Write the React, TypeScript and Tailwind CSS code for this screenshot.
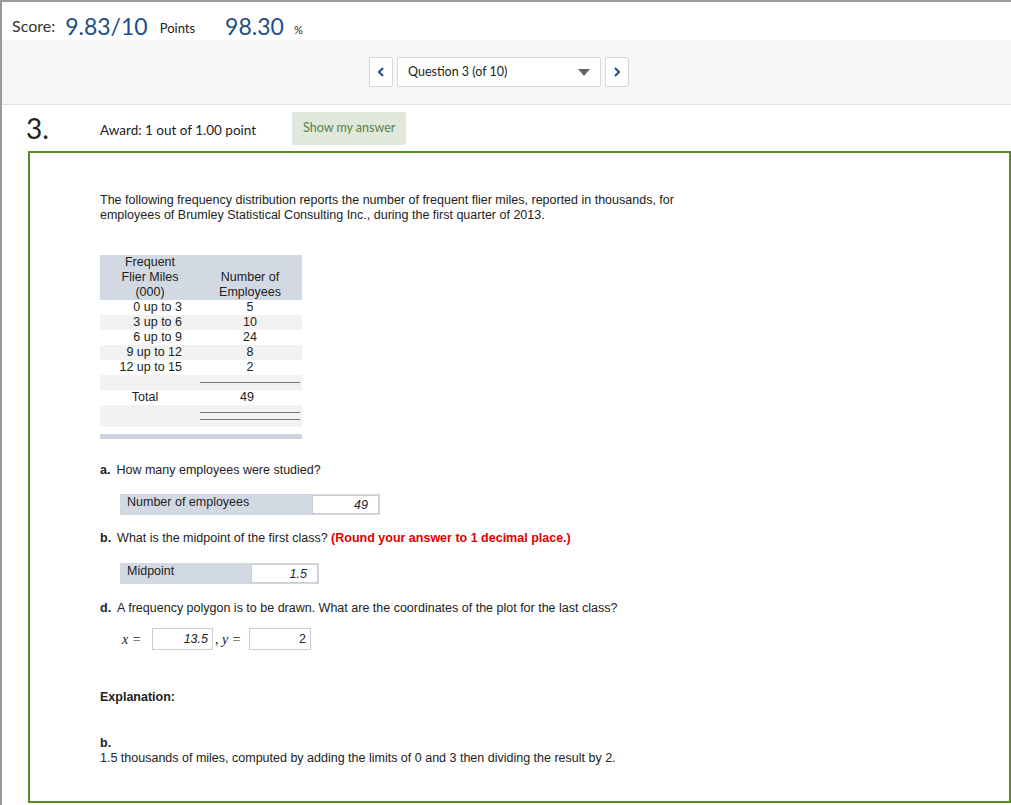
export default function App() {
  const rows = [
    ["0 up to 3", "5"],
    ["3 up to 6", "10"],
    ["6 up to 9", "24"],
    ["9 up to 12", "8"],
    ["12 up to 15", "2"],
  ];
  const arial = { fontFamily: '"Liberation Sans", Arial, sans-serif' };
  return (
    <div className="w-[1011px] h-[805px] bg-white overflow-hidden border-l-2 border-t-2 border-[#9a9a9a] text-[#222]" style={{ fontFamily: 'Lato, "Open Sans", sans-serif' }}>
      <div className="h-[38px] flex items-end pb-[2px] pl-[10px]">
        <span className="text-[16px] text-[#333] mr-[10px]">Score:</span>
        <span className="text-[23px] text-[#1f4f86] leading-none mr-[12px]">9.83/10</span>
        <span className="text-[13px] mr-[30px]">Points</span>
        <span className="text-[23px] text-[#1f4f86] leading-none mr-[10px]">98.30</span>
        <span className="text-[11px]">%</span>
      </div>
      <div className="h-[65px] bg-[#f7f7f7] border-b border-[#e2e2e2] flex items-center justify-end pr-[382px] gap-[4px]">
        <button className="w-[24px] h-[30px] bg-white border border-[#d6d6d6] rounded-[2px] flex items-center justify-center text-[#1f4f86]">
          <svg width="8" height="10" viewBox="0 0 8 10"><path d="M6 1 2 5l4 4" stroke="currentColor" strokeWidth="2" fill="none" /></svg>
        </button>
        <div className="w-[204px] h-[30px] bg-white border border-[#d6d6d6] rounded-[2px] flex items-center justify-between px-[10px] text-[12.5px]">
          <span>Question 3 (of 10)</span>
          <svg width="12" height="7" viewBox="0 0 12 7"><path d="M0 0h12L6 7z" fill="#666" /></svg>
        </div>
        <button className="w-[24px] h-[30px] bg-white border border-[#d6d6d6] rounded-[2px] flex items-center justify-center text-[#1f4f86]">
          <svg width="8" height="10" viewBox="0 0 8 10"><path d="M2 1l4 4-4 4" stroke="currentColor" strokeWidth="2" fill="none" /></svg>
        </button>
      </div>
      <div className="flex items-center h-[46px] pl-[24px]">
        <span className="text-[28px] w-[74px]">3.</span>
        <span className="text-[13.5px] w-[192px] pt-[4px]">Award: 1 out of 1.00 point</span>
        <span className="bg-[#dfe8da] text-[#5a7f4a] text-[12.5px] px-[11px] h-[33px] flex items-center rounded-[2px]">Show my answer</span>
      </div>
      <div className="ml-[26px] h-[652px] border-2 border-[#5a8a22] pl-[70px] pt-[40px] text-[12.5px] text-[#222]" style={arial}>
        <p className="leading-[15px] w-[620px]">The following frequency distribution reports the number of frequent flier miles, reported in thousands, for employees of Brumley Statistical Consulting Inc., during the first quarter of 2013.</p>
        <div className="mt-[32px] w-[202px]">
          <div className="flex bg-[#d3d9e3] leading-[15px] text-center">
            <div className="w-[100px]">Frequent<br />Flier Miles<br />(000)</div>
            <div className="w-[100px] self-end">Number of<br />Employees</div>
          </div>
          {rows.map(([a, b], i) => (
            <div key={a} className={`flex h-[15px] leading-[15px] ${i % 2 ? "bg-[#f2f2f2]" : ""}`}>
              <div className="w-[82px] text-right">{a}</div>
              <div className="w-[118px] text-center pl-[18px]">{b}</div>
            </div>
          ))}
          <div className="flex h-[15px] bg-[#f2f2f2]">
            <div className="w-[100px]" />
            <div className="w-[100px] border-b border-[#777] h-[8px]" />
          </div>
          <div className="flex h-[15px] leading-[15px]">
            <div className="w-[90px] text-center">Total</div>
            <div className="w-[110px] text-center pl-[4px]">49</div>
          </div>
          <div className="flex h-[22px] bg-[#f2f2f2]">
            <div className="w-[100px]" />
            <div className="w-[100px] mt-[7px] h-[8px] border-y border-[#777]" />
          </div>
          <div className="h-[5px] bg-[#ccd3de] mt-[7px]" />
        </div>
        <p className="mt-[22px]"><b className="mr-[6px]">a.</b>How many employees were studied?</p>
        <div className="ml-[20px] mt-[14px] w-[260px] h-[21px] bg-[#d3d9e3] flex justify-between items-center pl-[7px] pr-[1px]">
          <span className="self-start leading-[16px]">Number of employees</span>
          <span className="w-[67px] h-[19px] bg-white border border-[#ccc] text-right pr-[10px] italic text-[#223] leading-[18px]">49</span>
        </div>
        <p className="mt-[14px]"><b className="mr-[6px]">b.</b>What is the midpoint of the first class? <b className="text-[#e00000]">(Round your answer to 1 decimal place.)</b></p>
        <div className="ml-[20px] mt-[15px] w-[199px] h-[21px] bg-[#d3d9e3] flex justify-between items-center pl-[7px] pr-[1px]">
          <span className="self-start leading-[16px]">Midpoint</span>
          <span className="w-[67px] h-[19px] bg-white border border-[#ccc] text-right pr-[10px] italic text-[#223] leading-[18px]">1.5</span>
        </div>
        <p className="mt-[15px]"><b className="mr-[6px]">d.</b>A frequency polygon is to be drawn. What are the coordinates of the plot for the last class?</p>
        <div className="ml-[22px] mt-[11px] flex items-center h-[22px]">
          <span className="italic w-[30px] text-[14px]" style={{ fontFamily: '"Liberation Serif", serif' }}>x =</span>
          <span className="w-[61px] h-[22px] border border-[#ccc] text-right pr-[4px] italic leading-[20px]">13.5</span>
          <span className="italic ml-[2px] w-[34px] text-[14px]" style={{ fontFamily: '"Liberation Serif", serif' }}>, y =</span>
          <span className="w-[62px] h-[22px] border border-[#ccc] text-right pr-[4px] leading-[20px]">2</span>
        </div>
        <p className="mt-[38px] font-bold">Explanation:</p>
        <p className="mt-[29px] font-bold leading-[15px]">b.</p>
        <p className="leading-[15px]">1.5 thousands of miles, computed by adding the limits of 0 and 3 then dividing the result by 2.</p>
      </div>
    </div>
  );
}
